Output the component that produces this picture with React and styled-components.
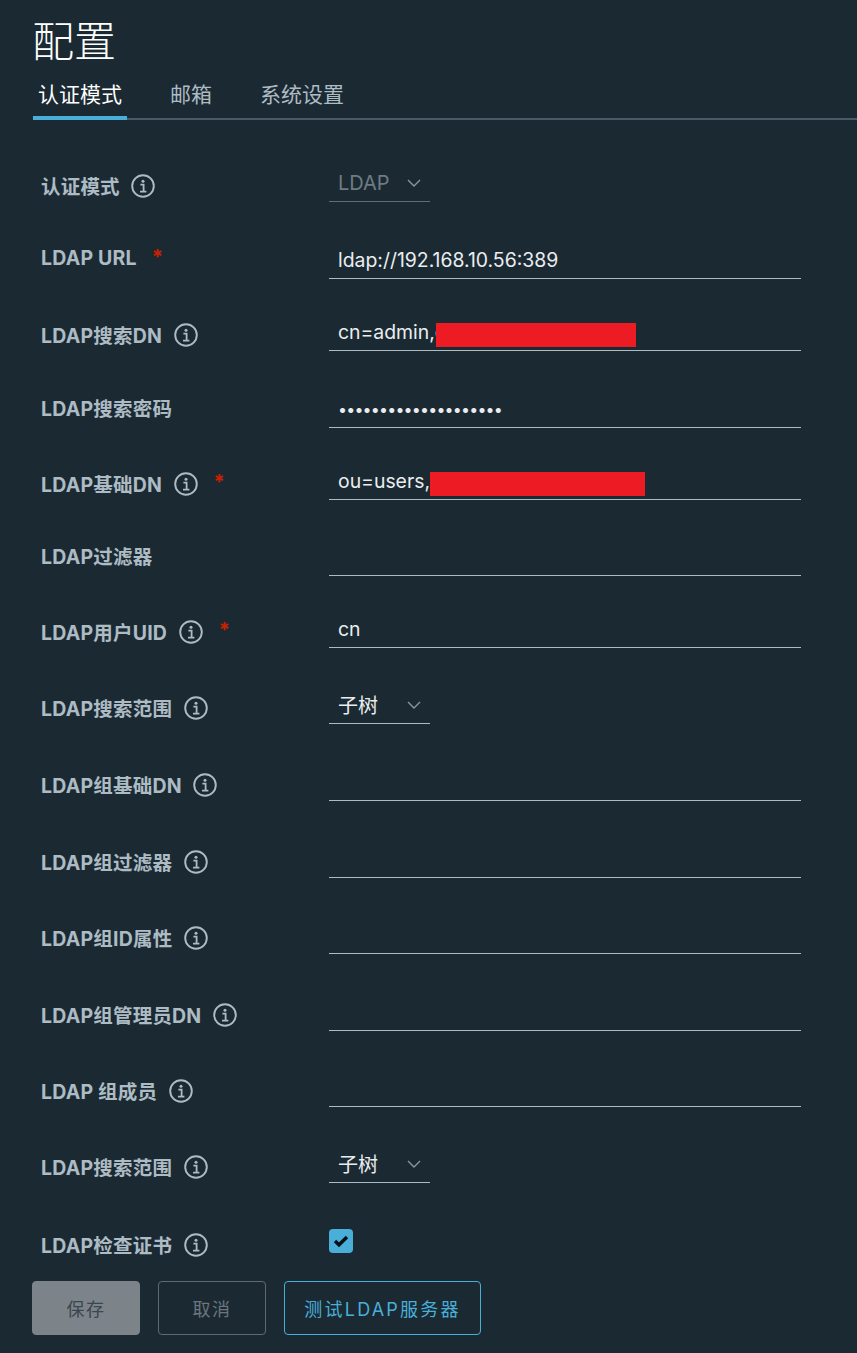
import React from "react"
import styled, { createGlobalStyle } from "styled-components"

const GlobalStyle = createGlobalStyle`
    html, body {
        margin: 0;
        padding: 0;
        background: #1b2a32;
    }
    body {
        font-family: Inter, "Noto Sans CJK SC", sans-serif;
    }
`

const Page = styled.div`
    width: 857px;
    height: 1353px;
    overflow: hidden;
    box-sizing: border-box;
    padding-top: 16px;
    background: #1b2a32;
`

const Title = styled.h1`
    margin: 0 0 0 32px;
    height: 52px;
    line-height: 52px;
    font-size: 42px;
    font-weight: 200;
    color: #ffffff;
`

const TabBar = styled.div`
    display: flex;
    gap: 38px;
    margin: 6px 0 0 33px;
    height: 46px;
    box-sizing: border-box;
    border-bottom: 2px solid #495a67;
`

const Tab = styled.div`
    padding: 0 5px;
    height: 46px;
    box-sizing: border-box;
    line-height: 42px;
    font-size: 21px;
    color: ${(props) => (props.$active ? "#ffffff" : "#adbbc4")};
    border-bottom: ${(props) => (props.$active ? "4px solid #49afd9" : "none")};
`

const Form = styled.div`
    display: flex;
    flex-direction: column;
    padding-left: 41px;
`

const Row = styled.div`
    display: grid;
    grid-template-columns: 288px 472px;
    align-items: end;
    height: ${(props) => props.$height}px;
`

const Label = styled.div`
    display: flex;
    align-items: center;
    align-self: end;
    height: 24px;
    margin-bottom: ${(props) => (props.$info ? 5 : 9)}px;
    font-size: 19.5px;
    font-weight: 700;
    letter-spacing: 0.2px;
    color: #adbbc4;
    white-space: pre;
`

const InfoIcon = styled.svg`
    width: 24px;
    height: 24px;
    margin: 0 0 -2px 11.5px;
    flex: none;
    color: #adbbc4;
`

const Required = styled.span`
    margin-left: ${(props) => props.$gap}px;
    margin-top: -2px;
    font-size: 20px;
    font-weight: 700;
    color: #c92100;
`

const Field = styled.div`
    position: relative;
    box-sizing: border-box;
    height: 36px;
    padding-left: 9px;
    line-height: 35px;
    font-size: 19.4px;
    color: #eaedf0;
    border-bottom: 1px solid #adbbc4;
    white-space: nowrap;
`

const Dots = styled.span`
    letter-spacing: -0.8px;
    font-size: 16px;
    vertical-align: 3px;
`

const Redaction = styled.div`
    position: absolute;
    top: 8px;
    left: ${(props) => props.$left}px;
    width: ${(props) => props.$width}px;
    height: 24px;
    background: #ed1c24;
`

const Select = styled.div`
    display: flex;
    align-items: center;
    justify-content: space-between;
    box-sizing: border-box;
    width: 101px;
    height: 36px;
    padding: 0 9px 2px;
    font-size: 20px;
    color: ${(props) => (props.$disabled ? "#6f7b83" : "#eaedf0")};
    border-bottom: 1px solid ${(props) => (props.$disabled ? "#5f6d76" : "#adbbc4")};
`

const Chevron = styled.svg`
    width: 14px;
    height: 8px;
    color: #8a979f;
`

const CheckBox = styled.div`
    display: flex;
    align-items: center;
    justify-content: center;
    align-self: start;
    width: 24px;
    height: 24px;
    margin-top: 46px;
    border-radius: 4px;
    background: #49afd9;
`

const Actions = styled.div`
    display: flex;
    gap: 18px;
    margin: 20px 0 0 32px;
`

const Button = styled.button`
    width: ${(props) => props.$width}px;
    height: 54px;
    box-sizing: border-box;
    padding: 0;
    font-family: Inter, "Noto Sans CJK SC", sans-serif;
    font-size: 18px;
    letter-spacing: ${(props) => props.$spacing || 1.4}px;
    border-radius: 4px;
    border: 1px solid ${(props) => props.$border};
    background: ${(props) => props.$bg || "transparent"};
    color: ${(props) => props.$color};
`

const Info = () => (
    <InfoIcon viewBox="0 0 24 24" fill="none">
        <circle cx="12" cy="12" r="10.8" stroke="currentColor" strokeWidth="1.9" />
        <circle cx="12" cy="7.3" r="1.5" fill="currentColor" />
        <path d="M9.4 10.6H12.6V17.4M9 17.6H15.4" stroke="currentColor" strokeWidth="1.8" />
    </InfoIcon>
)

const Arrow = () => (
    <Chevron viewBox="0 0 14 8" fill="none">
        <path d="M1 1L7 7L13 1" stroke="currentColor" strokeWidth="1.4" />
    </Chevron>
)

const rows = [
    { height: 77, label: "LDAP URL", value: "ldap://192.168.10.56:389", required: 15 },
    { height: 72, label: "LDAP搜索DN", info: true, value: "cn=admin,d", redact: [107, 200] },
    { height: 77, label: "LDAP搜索密码", dots: 20 },
    { height: 72, label: "LDAP基础DN", info: true, required: 16, value: "ou=users,d", redact: [101, 215] },
    { height: 76, label: "LDAP过滤器" },
    { height: 72, label: "LDAP用户UID", info: true, required: 16, value: "cn" },
    { height: 76, label: "LDAP搜索范围", info: true, select: "子树" },
    { height: 77, label: "LDAP组基础DN", info: true },
    { height: 77, label: "LDAP组过滤器", info: true },
    { height: 76, label: "LDAP组ID属性", info: true },
    { height: 77, label: "LDAP组管理员DN", info: true },
    { height: 76, label: "LDAP 组成员", info: true },
    { height: 76, label: "LDAP搜索范围", info: true, select: "子树" },
]

const App = () => {
    return (
        <Page>
            <GlobalStyle />
            <Title>配置</Title>
            <TabBar>
                <Tab $active>认证模式</Tab>
                <Tab>邮箱</Tab>
                <Tab>系统设置</Tab>
            </TabBar>
            <Form>
                <Row $height={82}>
                    <Label $info>认证模式<Info /></Label>
                    <Select $disabled>LDAP<Arrow /></Select>
                </Row>
                {rows.map((row, index) => (
                    <Row key={`${row.label}_${index}`} $height={row.height}>
                        <Label $info={row.info}>
                            {row.label}
                            {row.info && <Info />}
                            {row.required && <Required $gap={row.required}>*</Required>}
                        </Label>
                        {row.select ? (
                            <Select>{row.select}<Arrow /></Select>
                        ) : (
                            <Field>
                                {row.value}
                                {row.dots && <Dots>{"•".repeat(row.dots)}</Dots>}
                                {row.redact && <Redaction $left={row.redact[0]} $width={row.redact[1]} />}
                            </Field>
                        )}
                    </Row>
                ))}
                <Row $height={78}>
                    <Label $info>LDAP检查证书<Info /></Label>
                    <CheckBox>
                        <svg width="16" height="14" viewBox="0 0 16 14" fill="none">
                            <path d="M2 7L6 10.8L14 3" stroke="#0a1116" strokeWidth="3.4" />
                        </svg>
                    </CheckBox>
                </Row>
            </Form>
            <Actions>
                <Button $width={108} $border="#7c8489" $bg="#7c8489" $color="#3a4650">保存</Button>
                <Button $width={108} $border="#5f6a72" $color="#6a757d">取消</Button>
                <Button $width={197} $border="#49afd9" $color="#49afd9" $spacing={2.2}>测试LDAP服务器</Button>
            </Actions>
        </Page>
    )
}

export default App
